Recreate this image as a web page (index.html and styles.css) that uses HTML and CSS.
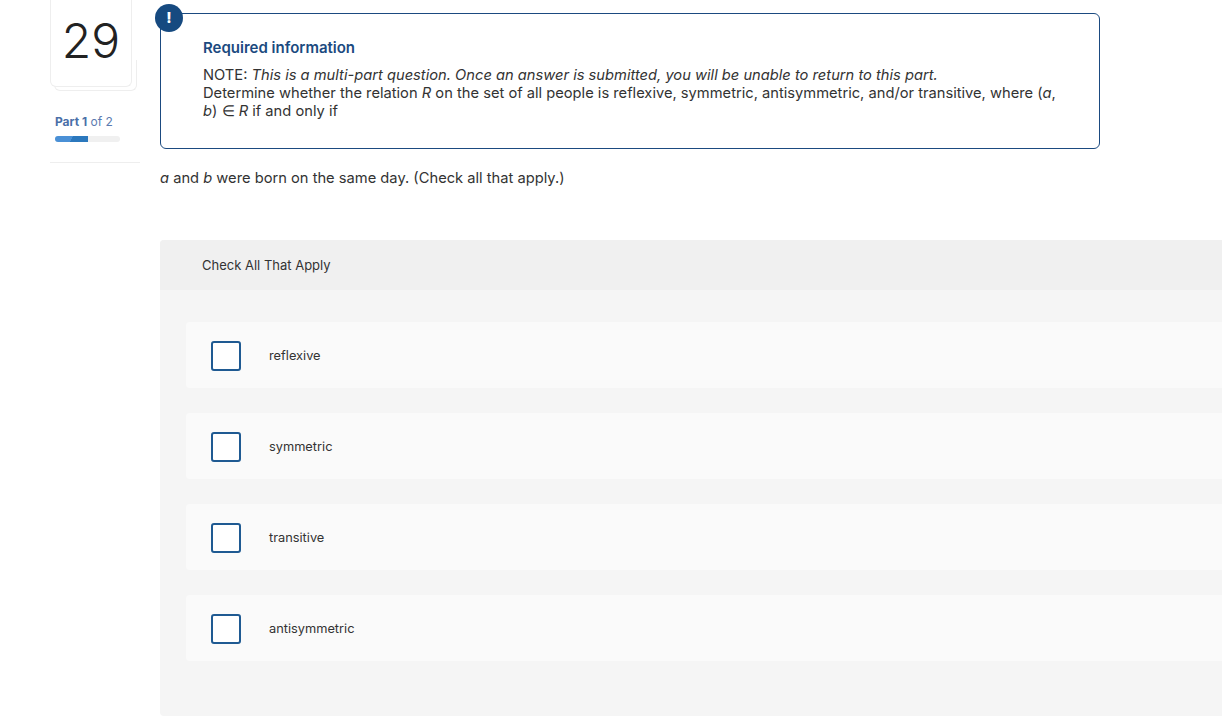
FILE: index.html
```html
<!doctype html>
<html>
    <head>
        <title>Question 29</title>
        <link rel="stylesheet" href="styles.css">
    </head>
    <body>
        <div class="page">
            <div class="sidebar">
                <div class="number-card">29</div>
                <div class="part-label"><b>Part 1</b> of 2</div>
                <div class="progress"><div class="progress-fill"></div></div>
                <div class="divider"></div>
            </div>

            <div class="main">
                <div class="notice">
                    <div class="notice-badge">!</div>
                    <h2>Required information</h2>
                    <p>NOTE: <i>This is a multi-part question. Once an answer is submitted, you will be unable to return to this part.</i><br>
                    Determine whether the relation <i>R</i> on the set of all people is reflexive, symmetric, antisymmetric, and/or transitive, where (<i>a</i>,<br>
                    <i>b</i>) ∈ <i>R</i> if and only if</p>
                </div>

                <p class="question"><i>a</i> and <i>b</i> were born on the same day. (Check all that apply.)</p>

                <div class="answers">
                    <div class="answers-head">Check All That Apply</div>
                    <div class="answers-list">
                        <div class="answer"><span class="box"></span><span>reflexive</span></div>
                        <div class="answer"><span class="box"></span><span>symmetric</span></div>
                        <div class="answer"><span class="box"></span><span>transitive</span></div>
                        <div class="answer"><span class="box"></span><span>antisymmetric</span></div>
                    </div>
                </div>
            </div>
        </div>
    </body>
</html>
```

FILE: styles.css
```css
html, body{
    margin: 0;
    height: 100%;
    overflow: hidden;
}
body{
    font-family: "Inter", "Open Sans", sans-serif;
    color: #333;
}
.page{
    display: flex;
    padding-left: 50px;
}
.sidebar{
    width: 90px;
    margin-right: 20px;
    flex-shrink: 0;
}
.number-card{
    width: 80px;
    height: 86px;
    border: 1px solid #eee;
    border-top: 0;
    border-radius: 0 0 6px 6px;
    background: #fff;
    position: relative;
    font-weight: 300;
    font-size: 48px;
    line-height: 82px;
    text-align: center;
    color: #222;
}
.number-card:after{
    content: "";
    position: absolute;
    left: 3px;
    right: -6px;
    bottom: -5px;
    height: 30px;
    border: 1px solid #eee;
    border-top: 0;
    border-radius: 0 0 6px 6px;
    z-index: -1;
}
.part-label{
    margin: 27px 0 0 5px;
    font-size: 12px;
    line-height: 16px;
    color: #5b7bb0;
}
.part-label b{
    color: #4a6fa8;
}
.progress{
    width: 65px;
    height: 6px;
    margin: 6px 0 0 5px;
    border-radius: 3px;
    background: #f0f0f0;
    overflow: hidden;
}
.progress-fill{
    width: 33px;
    height: 100%;
    background: linear-gradient(115deg, #4a90d6 50%, #2b78bd 50%);
}
.divider{
    height: 1px;
    margin-top: 20px;
    background: #eee;
}
.main{
    flex: 1;
    min-width: 0;
    padding-top: 13px;
}
.notice{
    position: relative;
    width: 940px;
    height: 136px;
    box-sizing: border-box;
    padding: 25px 42px 0;
    border: 1px solid #1b4a80;
    border-radius: 6px;
}
.notice-badge{
    position: absolute;
    left: -6px;
    top: -10px;
    width: 28px;
    height: 28px;
    border-radius: 50%;
    background: #164a80;
    color: #fff;
    font-weight: 800;
    font-size: 15px;
    line-height: 28px;
    text-align: center;
}
.notice h2{
    margin: 0 0 9px;
    font-size: 15px;
    line-height: 18px;
    font-weight: 600;
    color: #1b4a80;
}
.notice p{
    margin: 0;
    font-size: 14.7px;
    line-height: 18px;
}
.question{
    margin: 20px 0 0;
    font-size: 14.7px;
    line-height: 18px;
}
.answers{
    margin-top: 53px;
    height: 476px;
    background: #f5f5f5;
    border-radius: 4px 0 0 4px;
}
.answers-head{
    height: 50px;
    padding-left: 42px;
    background: #f0f0f0;
    border-radius: 4px 0 0 0;
    font-size: 13px;
    line-height: 50px;
}
.answers-list{
    display: flex;
    flex-direction: column;
    gap: 25px;
    padding: 32px 0 0 26px;
}
.answer{
    display: flex;
    align-items: center;
    height: 66px;
    padding-left: 25px;
    background: #fafafa;
    border-radius: 4px 0 0 4px;
    font-size: 12.8px;
}
.box{
    width: 30px;
    height: 30px;
    box-sizing: border-box;
    margin: 2px 28px 0 0;
    border: 2px solid #1f5a92;
    border-radius: 3px;
    background: #fff;
}
```
